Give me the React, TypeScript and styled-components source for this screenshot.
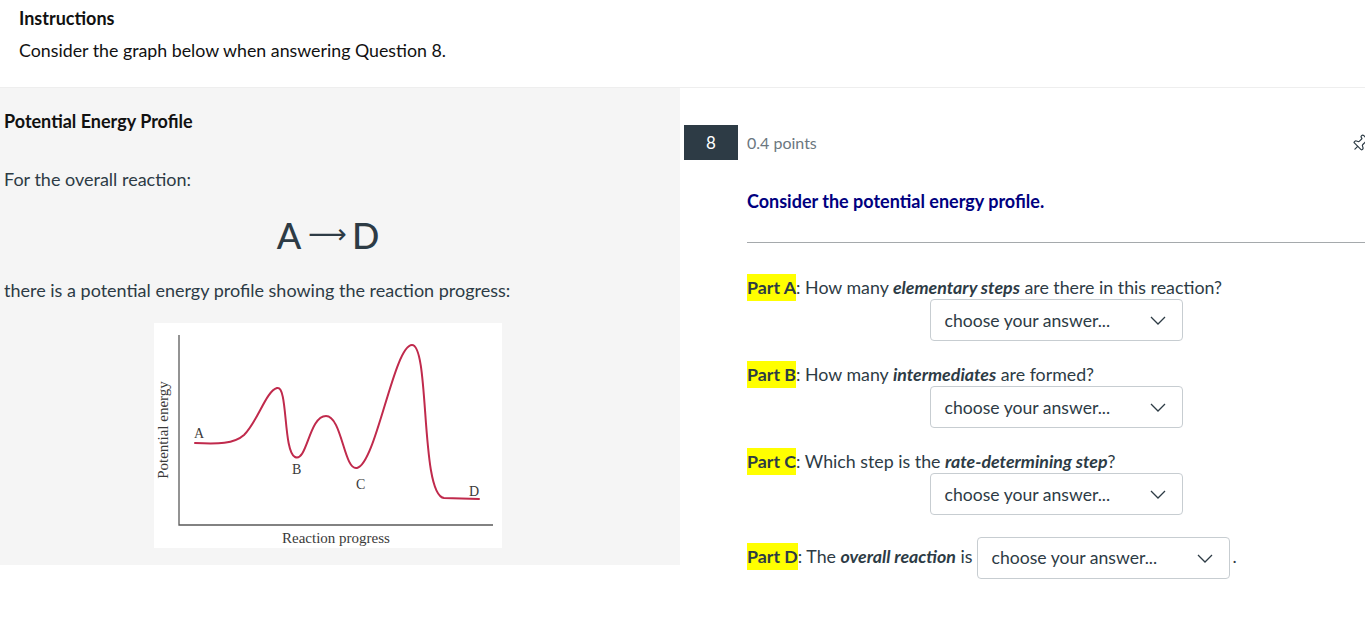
import styled, { createGlobalStyle } from "styled-components";
import { Pin } from "lucide-react";

const GlobalStyle = createGlobalStyle`
  html, body {
    margin: 0;
    padding: 0;
    background: #fff;
    overflow: hidden;
  }
  body {
    font-family: Lato, "Open Sans", sans-serif;
    color: #2d3b45;
    width: 1365px;
  }
`;

const Instructions = styled.section`
  padding: 6px 19px 0;
  height: 81px;
  color: #111;
`;

const InstructionsTitle = styled.h2`
  margin: 0;
  font-size: 18px;
  font-weight: 700;
  line-height: 24px;
`;

const InstructionsText = styled.p`
  margin: 8px 0 0;
  font-size: 17.8px;
  line-height: 24px;
`;

const QuizRow = styled.div`
  display: grid;
  grid-template-columns: 680px 1fr;
  border-top: 1px solid #eeeeee;
`;

const Passage = styled.div`
  background: #f5f5f5;
  height: 477px;
  padding: 21px 4px 0;
  box-sizing: border-box;
`;

const PassageTitle = styled.h3`
  margin: 0;
  font-size: 18px;
  font-weight: 700;
  line-height: 24px;
  color: #111;
`;

const PassageText = styled.p<{ $gap?: number }>`
  margin: ${(p) => p.$gap ?? 0}px 0 0;
  font-size: 18px;
  line-height: 24px;
`;

const Equation = styled.div`
  margin-top: 24px;
  display: flex;
  justify-content: center;
  align-items: center;
  font-size: 36px;
  line-height: 40px;
  font-weight: 500;
  padding-right: 24px;
`;

const Arrow = styled.span`
  font-family: "DejaVu Sans", sans-serif;
  font-size: 27px;
  font-weight: 400;
  margin: 0 5px 0 7px;
  position: relative;
  top: -1px;
`;

const Figure = styled.div`
  margin: 21px 0 0 150px;
  width: 348px;
  height: 225px;
  background: #fff;
`;

const Question = styled.div`
  padding-top: 37px;
  position: relative;
`;

const QuestionHeader = styled.div`
  display: flex;
  align-items: center;
  gap: 9px;
  padding-left: 4px;
`;

const NumberBox = styled.div`
  width: 54px;
  height: 35px;
  background: #2d3b45;
  color: #fff;
  font-size: 17px;
  display: flex;
  align-items: center;
  justify-content: center;
`;

const Points = styled.span`
  font-size: 16px;
  color: #6b7780;
`;

const PinButton = styled.span`
  position: absolute;
  left: 671px;
  top: 46px;
  color: #2d3b45;
  transform: rotate(45deg);
  display: flex;
`;

const QuestionBody = styled.div`
  padding-left: 67px;
`;

const Prompt = styled.p`
  margin: 29px 0 0;
  font-size: 18px;
  font-weight: 700;
  line-height: 24px;
  color: #000080;
`;

const Rule = styled.hr`
  margin: 29px 0 0;
  border: 0;
  border-top: 1px solid #a5a9ac;
`;

const PartText = styled.p<{ $gap: number }>`
  margin: ${(p) => p.$gap}px 0 0;
  font-size: 17.8px;
  line-height: 24px;
`;

const PartLabel = styled.strong`
  background: #ffff00;
  padding: 2px 0 3px;
`;

const SelectRow = styled.div`
  text-align: center;
`;

const SelectBox = styled.span<{ $inline?: boolean }>`
  display: inline-flex;
  align-items: center;
  justify-content: space-between;
  box-sizing: border-box;
  width: 253px;
  height: 42px;
  padding: 0 16px 0 14px;
  border: 1px solid #c7cdd1;
  border-radius: 4px;
  background: #fff;
  font-size: 17.6px;
  color: #2d3b45;
  text-align: left;
  vertical-align: middle;
  margin: ${(p) => (p.$inline ? "0 3px 0 4px" : "0")};
`;

const Chevron = styled.svg`
  flex: none;
  margin-top: 1px;
`;

function Select({ inline }: { inline?: boolean }) {
  return (
    <SelectBox $inline={inline}>
      <span>choose your answer...</span>
      <Chevron width="16" height="9" viewBox="0 0 16 9">
        <path
          d="M1 1 L8 8 L15 1"
          stroke="#2d3b45"
          strokeWidth="1.3"
          fill="none"
        />
      </Chevron>
    </SelectBox>
  );
}

function EnergyProfile() {
  return (
    <svg width="348" height="225" viewBox="0 0 348 225">
      <path
        d="M25 12 L25 202 L339 202"
        stroke="#5a5a5a"
        strokeWidth="1.3"
        fill="none"
      />
      <path
        d="M41 120 C64 121 80 121 90 112 C104 98 112 68 123 65 C134 62 129 128 141 134 C153 140 155 93 172 93 C188 93 190 148 203 145 C222 141 240 22 258 22 C276 22 266 172 290 175 L325 176"
        stroke="#c02a4c"
        strokeWidth="2"
        fill="none"
        strokeLinecap="round"
      />
      <g
        fontFamily='"Liberation Serif", "DejaVu Serif", serif'
        fontSize="14"
        fill="#3a3a3a"
      >
        <text x="40" y="115">A</text>
        <text x="138" y="151">B</text>
        <text x="202" y="166">C</text>
        <text x="315" y="173">D</text>
        <text x="182" y="220" textAnchor="middle" fontSize="15">
          Reaction progress
        </text>
        <text
          x="14"
          y="107"
          textAnchor="middle"
          fontSize="15"
          transform="rotate(-90 14 107)"
        >
          Potential energy
        </text>
      </g>
    </svg>
  );
}

export default function App() {
  return (
    <>
      <GlobalStyle />
      <Instructions>
        <InstructionsTitle>Instructions</InstructionsTitle>
        <InstructionsText>
          Consider the graph below when answering Question 8.
        </InstructionsText>
      </Instructions>
      <QuizRow>
        <Passage>
          <PassageTitle>Potential Energy Profile</PassageTitle>
          <PassageText $gap={34}>For the overall reaction:</PassageText>
          <Equation>
            A<Arrow>⟶</Arrow>D
          </Equation>
          <PassageText $gap={23}>
            there is a potential energy profile showing the reaction progress:
          </PassageText>
          <Figure>
            <EnergyProfile />
          </Figure>
        </Passage>
        <Question>
          <QuestionHeader>
            <NumberBox>8</NumberBox>
            <Points>0.4 points</Points>
          </QuestionHeader>
          <PinButton>
            <Pin size={19} strokeWidth={1.5} />
          </PinButton>
          <QuestionBody>
            <Prompt>Consider the potential energy profile.</Prompt>
            <Rule />
            <PartText $gap={32}>
              <PartLabel>Part A</PartLabel>: How many{" "}
              <strong>
                <em>elementary steps</em>
              </strong>{" "}
              are there in this reaction?
            </PartText>
            <SelectRow>
              <Select />
            </SelectRow>
            <PartText $gap={21}>
              <PartLabel>Part B</PartLabel>: How many{" "}
              <strong>
                <em>intermediates</em>
              </strong>{" "}
              are formed?
            </PartText>
            <SelectRow>
              <Select />
            </SelectRow>
            <PartText $gap={21}>
              <PartLabel>Part C</PartLabel>: Which step is the{" "}
              <strong>
                <em>rate-determining step</em>
              </strong>
              ?
            </PartText>
            <SelectRow>
              <Select />
            </SelectRow>
            <PartText $gap={22}>
              <PartLabel>Part D</PartLabel>: The{" "}
              <strong>
                <em>overall reaction</em>
              </strong>{" "}
              is
              <Select inline />.
            </PartText>
          </QuestionBody>
        </Question>
      </QuizRow>
    </>
  );
}
